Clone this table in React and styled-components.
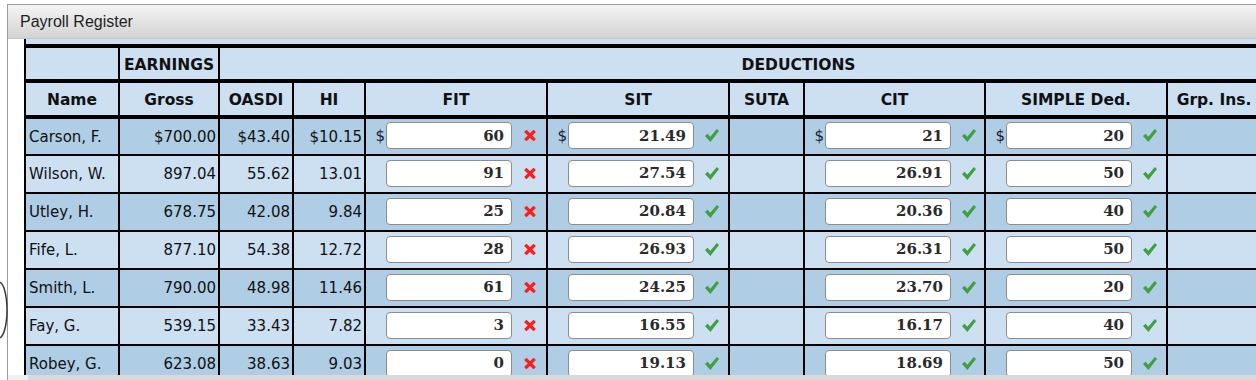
import React from 'react';
import styled, { createGlobalStyle } from 'styled-components';

const Global = createGlobalStyle`
  html, body { margin: 0; padding: 0; background: #fff; overflow: hidden; }
  #root { width: 1256px; height: 380px; }
`;

const HEAD_BG = '#cde0f1';
const DARK_BG = '#afcde4';

const Page = styled.div`
  position: relative;
  width: 1256px;
  height: 380px;
  overflow: hidden;
  padding-top: 4px;
  box-sizing: border-box;
  background: #fff;
`;

const Deco = styled.svg`
  position: absolute;
  left: 0;
  top: 279px;
`;

const Window = styled.section`
  margin-left: 7px;
  height: 376px;
  box-sizing: border-box;
  border-top: 1px solid #9c9c9c;
  border-left: 1px solid #9c9c9c;
  display: flex;
  flex-direction: column;
  overflow: hidden;
  background: #fff;
`;

const TitleBar = styled.header`
  flex: none;
  height: 33px;
  display: flex;
  align-items: center;
  padding-left: 12px;
  background: linear-gradient(#f4f4f4, #d3d3d3);
  border-bottom: 1px solid #c6c6c6;
  font: 16px "Liberation Sans", Arial, sans-serif;
  color: #1e1e1e;
`;

const Viewport = styled.div`
  flex: 1;
  min-height: 0;
  overflow: hidden;
  padding-left: 16px;
`;

const HScroll = styled.div`
  flex: none;
  height: 5px;
  display: flex;
  padding-left: 20px;
  background: #f0f0f0;
`;

const Thumb = styled.div`
  flex: 1;
  background: #d9d9d9;
`;

const Table = styled.table`
  border-collapse: collapse;
  table-layout: fixed;
  width: ${p => p.$w}px;
  font: 15px "DejaVu Sans", Verdana, sans-serif;
  color: #111;
`;

const Row = styled.tr`
  height: ${p => p.$h}px;
  background: ${p => p.$bg};
`;

const SpacerCell = styled.td`
  padding: 0;
  border-left: 2px solid #000;
  border-bottom: 4px solid #000;
`;

const Head = styled.th`
  padding: 0 0 ${p => (p.$thickTop ? '0' : '0')};
  text-align: center;
  font-weight: bold;
  font-size: 15.5px;
  line-height: 18px;
  border: 2px solid #000;
  border-bottom: 4px solid #000;
  ${p => p.$thickTop && 'border-top: 4px solid #000; padding-top: 2px;'}
  ${p => !p.$thickTop && 'padding-top: 1px;'}
  white-space: nowrap;
`;

const Cell = styled.td`
  padding: ${p => (p.$left ? '0 0 0 3px' : '0 2px 0 0')};
  text-align: ${p => (p.$left ? 'left' : 'right')};
  border: 2px solid #000;
  white-space: nowrap;
`;

const FieldCell = styled.td`
  padding: 0;
  border: 2px solid #000;
`;

const Field = styled.div`
  display: flex;
  align-items: center;
  padding-bottom: 2px;
`;

const Dollar = styled.span`
  flex: none;
  width: 20px;
  box-sizing: border-box;
  padding-right: 1px;
  text-align: right;
  color: #1c1c2c;
`;

const Amount = styled.input`
  flex: none;
  width: 126px;
  height: 27px;
  box-sizing: border-box;
  margin: 0;
  padding: 0 7px 0 4px;
  border: 1px solid #8c8c8c;
  border-radius: 4px;
  background: #fff;
  text-align: right;
  font: bold 15px "DejaVu Serif", Cambria, Georgia, serif;
  color: #2a2a2a;
  outline: none;
`;

const Mark = styled.span`
  flex: none;
  margin-left: ${p => (p.$ok ? 11 : 12)}px;
  width: 14px;
  display: flex;
  align-items: center;
`;

const XMark = () => (
  <svg width="12" height="11" viewBox="0 0 12 11">
    <path d="M1.3 0.8 L10.7 10.2 M10.7 0.8 L1.3 10.2" stroke="#fa1e1e" strokeWidth="3.3" fill="none" />
  </svg>
);

const CheckMark = () => (
  <svg width="14" height="13" viewBox="0 0 14 13">
    <path d="M0 7 L2.6 4.8 L5.3 7.7 L11.8 0 L14 2 L5.4 12.9 Z" fill="#40a040" />
  </svg>
);

const cols = [94, 100, 74, 72, 182, 182, 75, 181, 182, 94, 117];
const tableWidth = cols.reduce((a, b) => a + b, 0);

const rows = [
  ['Carson, F.', '$700.00', '$43.40', '$10.15', '60', '21.49', '21', '20'],
  ['Wilson, W.', '897.04', '55.62', '13.01', '91', '27.54', '26.91', '50'],
  ['Utley, H.', '678.75', '42.08', '9.84', '25', '20.84', '20.36', '40'],
  ['Fife, L.', '877.10', '54.38', '12.72', '28', '26.93', '26.31', '50'],
  ['Smith, L.', '790.00', '48.98', '11.46', '61', '24.25', '23.70', '20'],
  ['Fay, G.', '539.15', '33.43', '7.82', '3', '16.55', '16.17', '40'],
  ['Robey, G.', '623.08', '38.63', '9.03', '0', '19.13', '18.69', '50'],
];

function AmountField({ value, dollar, ok }) {
  return (
    <FieldCell>
      <Field>
        <Dollar>{dollar ? '$' : ''}</Dollar>
        <Amount readOnly value={value} />
        <Mark $ok={ok}>{ok ? <CheckMark /> : <XMark />}</Mark>
      </Field>
    </FieldCell>
  );
}

export default function App() {
  return (
    <Page>
      <Global />
      <Deco width="8" height="62" viewBox="0 0 8 62">
        <ellipse cx="-1" cy="31" rx="8" ry="28" stroke="#3a3a3a" strokeWidth="1.5" fill="none" />
      </Deco>
      <Window>
        <TitleBar>Payroll Register</TitleBar>
        <Viewport>
          <Table $w={tableWidth}>
            <colgroup>
              {cols.map((w, i) => (
                <col key={i} style={{ width: w }} />
              ))}
            </colgroup>
            <tbody>
              <Row $h={7} $bg={HEAD_BG}>
                <SpacerCell colSpan={11} />
              </Row>
              <Row $h={35} $bg={HEAD_BG}>
                <Head $thickTop />
                <Head $thickTop>EARNINGS</Head>
                <Head $thickTop colSpan={9}>DEDUCTIONS</Head>
              </Row>
              <Row $h={36} $bg={HEAD_BG}>
                <Head>Name</Head>
                <Head>Gross</Head>
                <Head>OASDI</Head>
                <Head>HI</Head>
                <Head>FIT</Head>
                <Head>SIT</Head>
                <Head>SUTA</Head>
                <Head>CIT</Head>
                <Head>SIMPLE Ded.</Head>
                <Head>Grp. Ins.</Head>
                <Head />
              </Row>
              {rows.map((r, i) => (
                <Row key={r[0]} $h={38} $bg={i % 2 === 0 ? DARK_BG : HEAD_BG}>
                  <Cell $left>{r[0]}</Cell>
                  <Cell>{r[1]}</Cell>
                  <Cell>{r[2]}</Cell>
                  <Cell>{r[3]}</Cell>
                  <AmountField value={r[4]} dollar={i === 0} ok={false} />
                  <AmountField value={r[5]} dollar={i === 0} ok />
                  <Cell />
                  <AmountField value={r[6]} dollar={i === 0} ok />
                  <AmountField value={r[7]} dollar={i === 0} ok />
                  <Cell />
                  <Cell />
                </Row>
              ))}
            </tbody>
          </Table>
        </Viewport>
        <HScroll>
          <Thumb />
        </HScroll>
      </Window>
    </Page>
  );
}
